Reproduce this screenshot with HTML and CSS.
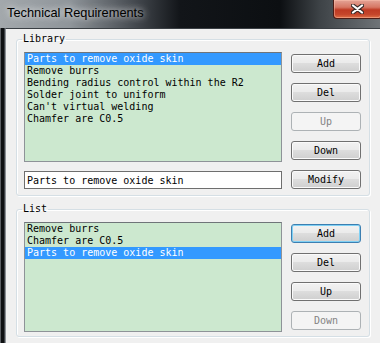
FILE: index.html
```html
<!DOCTYPE html>
<html lang="en">
<head>
  <meta charset="UTF-8" />
  <title>Technical Requirements</title>
  <link rel="stylesheet" href="styles.css">
</head>
<body>
  <div class="window">
    <div class="titlebar">
      <span class="title">Technical Requirements</span>
      <button class="close" title="Close">
        <svg width="13" height="10" viewBox="0 0 13 10">
          <path d="M2 1.5 L11 8.5 M11 1.5 L2 8.5" stroke="#3b2a28" stroke-width="4.2" stroke-linecap="round" fill="none"/>
          <path d="M2 1.5 L11 8.5 M11 1.5 L2 8.5" stroke="#ffffff" stroke-width="2.2" stroke-linecap="round" fill="none"/>
        </svg>
      </button>
    </div>

    <div class="client">
      <!-- Library -->
      <fieldset class="group">
        <legend>Library</legend>
        <div class="group-body">
          <div class="left-col">
            <ul class="listbox">
              <li class="selected">Parts to remove oxide skin</li>
              <li>Remove burrs</li>
              <li>Bending radius control within the R2</li>
              <li>Solder joint to uniform</li>
              <li>Can't virtual welding</li>
              <li>Chamfer are C0.5</li>
            </ul>
            <input class="edit" type="text" value="Parts to remove oxide skin">
          </div>
          <div class="btn-col">
            <button class="btn">Add</button>
            <button class="btn">Del</button>
            <button class="btn" disabled>Up</button>
            <button class="btn">Down</button>
            <button class="btn">Modify</button>
          </div>
        </div>
      </fieldset>

      <!-- List -->
      <fieldset class="group group-list">
        <legend>List</legend>
        <div class="group-body">
          <div class="left-col">
            <ul class="listbox">
              <li>Remove burrs</li>
              <li>Chamfer are C0.5</li>
              <li class="selected">Parts to remove oxide skin</li>
            </ul>
          </div>
          <div class="btn-col">
            <button class="btn default">Add</button>
            <button class="btn">Del</button>
            <button class="btn">Up</button>
            <button class="btn" disabled>Down</button>
          </div>
        </div>
      </fieldset>
    </div>
  </div>
</body>
</html>
```

FILE: styles.css
```css
body {
  margin: 0;
  background: #f0f0f0;
}

.window {
  width: 380px;
  height: 343px;
  overflow: hidden;
  display: flex;
  flex-direction: column;
  background: linear-gradient(to right, #5c6064 0, #5c6064 1px, #0e1012 1px, #0e1012 4px, #3d4145 4px, #3d4145 5px, #f0f0f0 5px);
}

/* title bar */
.titlebar {
  height: 28px;
  flex: none;
  display: flex;
  align-items: flex-start;
  background: linear-gradient(to right, #a3a8ac 0, #8f959a 70px, #4a4f55 130px, #121519 180px, #0c0f12 280px, #3e4347 320px, #6f7478 380px);
}

.title {
  margin: 5px 0 0 7px;
  font-family: "Liberation Sans", Arial, sans-serif;
  font-size: 12.8px;
  line-height: 16px;
  color: #000;
  text-shadow: 0 0 6px rgba(255, 255, 255, 0.8), 0 0 10px rgba(255, 255, 255, 0.5);
}

.close {
  margin-left: auto;
  margin-right: -2px;
  width: 49px;
  height: 19px;
  padding: 0;
  display: flex;
  align-items: center;
  justify-content: center;
  border: 1px solid #4d1c15;
  border-top: none;
  border-radius: 0 0 4px 4px;
  background: linear-gradient(#e4a497 0, #d67764 40%, #bf3a23 55%, #c5452b 80%, #df6f45 100%);
  box-shadow: inset 0 0 0 1px rgba(255, 200, 180, 0.45);
}

/* client area */
.client {
  flex: 1;
  margin-left: 5px;
  border-left: 1px solid #8c9196;
  border-top: 1px solid #3a3f44;
  background: #f0f0f0;
  padding-top: 4px;
}

.group {
  box-sizing: border-box;
  width: 354px;
  margin: 0 0 0 10px;
  padding: 7px 8px 6px 7px;
  min-width: 0;
  border: 1px solid #d5dfe5;
  border-radius: 3px;
  box-shadow: inset 1px 1px 0 #fff, 1px 1px 0 #fff;
}

.group-list {
  margin-top: 7px;
  padding-bottom: 4px;
}

.group legend,
.listbox,
.edit,
.btn {
  font-family: "DejaVu Sans Mono", "Liberation Mono", monospace;
  font-size: 10px;
  color: #000;
}

.group legend {
  padding: 0 1px;
  margin-left: -2px;
  line-height: 12px;
}

.group-body {
  display: flex;
  gap: 9px;
}

.left-col {
  width: 258px;
  display: flex;
  flex-direction: column;
  gap: 9px;
}

.listbox {
  box-sizing: border-box;
  height: 110px;
  margin: 0;
  padding: 0;
  list-style: none;
  border: 1px solid #8e9398;
  border-top-color: #6f7479;
  background: #cce8cf;
  overflow: hidden;
}

.listbox li {
  height: 12px;
  line-height: 12px;
  padding-left: 2px;
  white-space: nowrap;
}

.listbox li.selected {
  background: #3399ff;
  color: #fff;
}

.edit {
  box-sizing: border-box;
  height: 18px;
  margin: 0;
  padding: 0 2px;
  border: 1px solid #6e6e6e;
  background: #fff;
  outline: none;
}

.btn-col {
  width: 70px;
  display: flex;
  flex-direction: column;
  gap: 10px;
  padding-top: 2px;
}

.btn {
  box-sizing: border-box;
  height: 19px;
  padding: 0;
  border: 1px solid #707070;
  border-radius: 3px;
  background: linear-gradient(#f2f2f2 0, #ebebeb 45%, #dddddd 50%, #cfcfcf 100%);
  box-shadow: inset 0 0 0 1px #fafafa;
  line-height: 17px;
}

.btn:disabled {
  border-color: #adb2b5;
  background: #f4f4f4;
  box-shadow: none;
  color: #838383;
}

.btn.default {
  border-color: #3c7fb1;
  box-shadow: inset 0 0 0 1px #7fd0f4;
}
```
